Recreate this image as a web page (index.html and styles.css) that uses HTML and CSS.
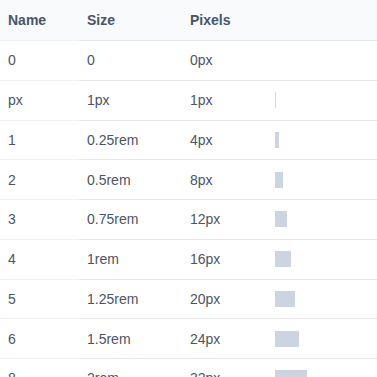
FILE: index.html
```html
<!DOCTYPE html>
<html>
<head>
<meta charset="utf-8">
<link rel="stylesheet" href="styles.css">
</head>
<body>
<div class="table">
  <div class="row head">
    <div class="c name">Name</div><div class="c size">Size</div><div class="c px">Pixels</div><div class="c bar"></div>
  </div>
  <div class="row"><div class="c name">0</div><div class="c size">0</div><div class="c px">0px</div><div class="c bar"><span class="b" style="width:0px"></span></div></div>
  <div class="row"><div class="c name">px</div><div class="c size">1px</div><div class="c px">1px</div><div class="c bar"><span class="b" style="width:1px"></span></div></div>
  <div class="row"><div class="c name">1</div><div class="c size">0.25rem</div><div class="c px">4px</div><div class="c bar"><span class="b" style="width:4px"></span></div></div>
  <div class="row"><div class="c name">2</div><div class="c size">0.5rem</div><div class="c px">8px</div><div class="c bar"><span class="b" style="width:8px"></span></div></div>
  <div class="row"><div class="c name">3</div><div class="c size">0.75rem</div><div class="c px">12px</div><div class="c bar"><span class="b" style="width:12px"></span></div></div>
  <div class="row"><div class="c name">4</div><div class="c size">1rem</div><div class="c px">16px</div><div class="c bar"><span class="b" style="width:16px"></span></div></div>
  <div class="row"><div class="c name">5</div><div class="c size">1.25rem</div><div class="c px">20px</div><div class="c bar"><span class="b" style="width:20px"></span></div></div>
  <div class="row"><div class="c name">6</div><div class="c size">1.5rem</div><div class="c px">24px</div><div class="c bar"><span class="b" style="width:24px"></span></div></div>
  <div class="row"><div class="c name">8</div><div class="c size">2rem</div><div class="c px">32px</div><div class="c bar"><span class="b" style="width:32px"></span></div></div>
  <div class="row"><div class="c name">10</div><div class="c size">2.5rem</div><div class="c px">40px</div><div class="c bar"><span class="b" style="width:40px"></span></div></div>
</div>
</body>
</html>
```
FILE: styles.css
```css
html, body {
  margin: 0;
  padding: 0;
  background: #ffffff;
  overflow: hidden;
}
body {
  font-family: "Liberation Sans", Arial, sans-serif;
  font-size: 14px;
  color: #4b5563;
}
.table {
  display: flex;
  flex-direction: column;
}
.row {
  display: grid;
  grid-template-columns: 79px 103px 85px 1fr;
  height: 39.75px;
}
.row.head {
  height: 41px;
  background: #f8fafc;
  font-weight: bold;
  color: #475569;
}
.c {
  display: flex;
  align-items: center;
  padding: 0 8px;
  line-height: 16px;
  border-bottom: 1px solid #e5e7eb;
}
.c.name {
  border-bottom-color: #f0f2f5;
}
.b {
  display: block;
  height: 16px;
  background: #cbd5e1;
}
```
